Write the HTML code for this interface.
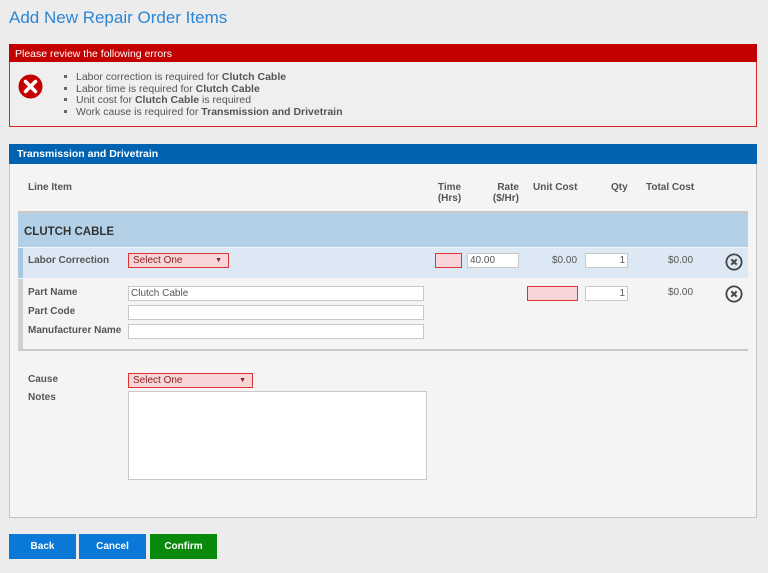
<!DOCTYPE html>
<html><head><meta charset="utf-8"><style>
*{box-sizing:border-box;margin:0;padding:0}
body{width:768px;height:573px;background:#ececec;font-family:"Liberation Sans",Arial,sans-serif;position:relative;overflow:hidden;color:#444}
.a{position:absolute}
.b{font-weight:bold}
.lbl{font-size:10px;font-weight:bold;color:#555}
.inp{position:absolute;background:#fff;border:1px solid #c8c8c8;height:15px;font-size:10px;color:#555;line-height:14px;padding:0 2px}
.err{background:#f7d5d9;border:1px solid #d33}
.sel{position:absolute;background:#f7d5d9;border:1px solid #d33;height:15px;font-size:10px;color:#8a1f1f;line-height:14px;padding-left:4px}
.sel span{position:absolute;right:6px;top:0;font-size:7px}
.btn{position:absolute;top:534px;height:25px;color:#fff;font-weight:bold;font-size:10px;text-align:center;line-height:26px}
ul{list-style:none}
li:before{content:"";display:inline-block;width:3px;height:3px;background:#666;margin:0 9px 2px 1px}
</style></head><body>
<div class="a" style="left:9px;top:8px;font-size:17px;color:#2b86d6">Add New Repair Order Items</div>

<div class="a" style="left:9px;top:44px;width:748px;height:83px;border:1px solid #d22;background:#efefef"></div>
<div class="a" style="left:9px;top:44px;width:748px;height:18px;background:#c30000;color:#fff;font-size:10.5px;line-height:20px;padding-left:6px">Please review the following errors</div>
<svg class="a" style="left:18px;top:74px" width="25" height="25" viewBox="0 0 25 25"><circle cx="12.5" cy="12.5" r="12" fill="#c40000"/><path d="M7.5 7.5L17.5 17.5M17.5 7.5L7.5 17.5" stroke="#fff" stroke-width="3.6" stroke-linecap="round"/></svg>
<ul class="a" style="left:63px;top:72px;font-size:10.5px;line-height:11.6px;color:#555">
<li>Labor correction is required for <b>Clutch Cable</b></li>
<li>Labor time is required for <b>Clutch Cable</b></li>
<li>Unit cost for <b>Clutch Cable</b> is required</li>
<li>Work cause is required for <b>Transmission and Drivetrain</b></li>
</ul>

<div class="a" style="left:9px;top:144px;width:748px;height:374px;border:1px solid #c4c4c4;background:#f4f4f4"></div>
<div class="a" style="left:9px;top:144px;width:748px;height:20px;background:#0063b1;color:#fff;font-size:10.5px;font-weight:bold;line-height:21px;padding-left:8px">Transmission and Drivetrain</div>

<div class="a lbl" style="left:28px;top:182px">Line Item</div>
<div class="a lbl" style="left:436px;top:182px;text-align:center;width:27px;line-height:11px">Time<br>(Hrs)</div>
<div class="a lbl" style="left:480px;top:182px;text-align:right;width:39px;line-height:11px">Rate<br>($/Hr)</div>
<div class="a lbl" style="left:533px;top:182px">Unit Cost</div>
<div class="a lbl" style="left:611px;top:182px">Qty</div>
<div class="a lbl" style="left:646px;top:182px">Total Cost</div>

<div class="a" style="left:18px;top:211px;width:730px;height:2px;background:#c8c8c8"></div>
<div class="a" style="left:18px;top:213px;width:730px;height:34px;background:#b3d0e6"></div>
<div class="a b" style="left:24px;top:226px;font-size:11.5px;color:#333">CLUTCH CABLE</div>

<div class="a" style="left:18px;top:248px;width:730px;height:30px;background:#dce8f3"></div>
<div class="a" style="left:18px;top:248px;width:5px;height:30px;background:#a9c8e0"></div>
<div class="a lbl" style="left:28px;top:255px">Labor Correction</div>
<div class="sel" style="left:128px;top:253px;width:101px">Select One<span>▼</span></div>
<div class="inp err" style="left:435px;top:253px;width:27px"></div>
<div class="inp" style="left:467px;top:253px;width:52px">40.00</div>
<div class="a" style="left:552px;top:255px;font-size:10px;color:#555">$0.00</div>
<div class="inp" style="left:585px;top:253px;width:43px;text-align:right">1</div>
<div class="a" style="left:668px;top:255px;font-size:10px;color:#555">$0.00</div>

<div class="a" style="left:18px;top:279px;width:5px;height:70px;background:#d2d2d2"></div>
<div class="a lbl" style="left:28px;top:287px">Part Name</div>
<div class="a lbl" style="left:28px;top:306px">Part Code</div>
<div class="a lbl" style="left:28px;top:325px">Manufacturer Name</div>
<div class="inp" style="left:128px;top:286px;width:296px">Clutch Cable</div>
<div class="inp" style="left:128px;top:305px;width:296px"></div>
<div class="inp" style="left:128px;top:324px;width:296px"></div>
<div class="inp err" style="left:527px;top:286px;width:51px"></div>
<div class="inp" style="left:585px;top:286px;width:43px;text-align:right">1</div>
<div class="a" style="left:668px;top:287px;font-size:10px;color:#555">$0.00</div>
<div class="a" style="left:18px;top:349px;width:730px;height:2px;background:#c8c8c8"></div>

<svg class="a" style="left:725px;top:253px" width="18" height="18" viewBox="0 0 18 18"><circle cx="9" cy="9" r="7.6" fill="none" stroke="#444" stroke-width="1.8"/><path d="M6.3 6.3L11.7 11.7M11.7 6.3L6.3 11.7" stroke="#444" stroke-width="2"/></svg>
<svg class="a" style="left:725px;top:285px" width="18" height="18" viewBox="0 0 18 18"><circle cx="9" cy="9" r="7.6" fill="none" stroke="#444" stroke-width="1.8"/><path d="M6.3 6.3L11.7 11.7M11.7 6.3L6.3 11.7" stroke="#444" stroke-width="2"/></svg>

<div class="a lbl" style="left:28px;top:374px">Cause</div>
<div class="sel" style="left:128px;top:373px;width:125px">Select One<span>▼</span></div>
<div class="a lbl" style="left:28px;top:392px">Notes</div>
<div class="a" style="left:128px;top:391px;width:299px;height:89px;background:#fff;border:1px solid #c8c8c8"></div>

<div class="btn" style="left:9px;width:67px;background:#0a78d7">Back</div>
<div class="btn" style="left:79px;width:67px;background:#0a78d7">Cancel</div>
<div class="btn" style="left:150px;width:67px;background:#0a8a0a">Confirm</div>
</body></html>
